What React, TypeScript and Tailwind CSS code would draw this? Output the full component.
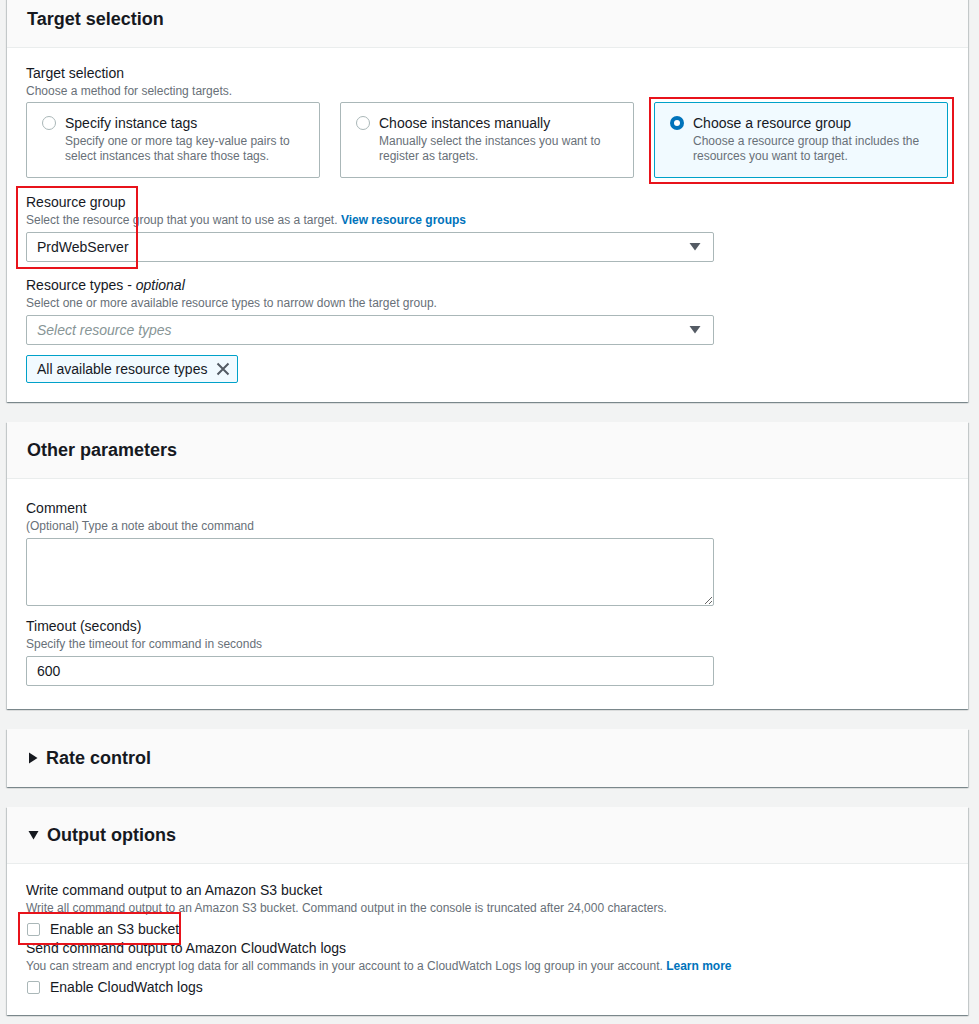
import type { ReactNode } from "react";

const font = { fontFamily: '"Liberation Sans", Arial, sans-serif' };

function Panel({ children, className = "" }: { children: ReactNode; className?: string }) {
  return (
    <div
      className={`ml-[7px] w-[961px] bg-white shadow-[0_1px_1px_0_rgba(0,28,36,0.3),1px_1px_1px_0_rgba(0,28,36,0.15),-1px_1px_1px_0_rgba(0,28,36,0.15)] ${className}`}
    >
      {children}
    </div>
  );
}

function CaretRight() {
  return (
    <svg width="10" height="12" viewBox="0 0 10 12" className="ml-[1px]">
      <path d="M1 0.5 L9.5 6 L1 11.5 Z" fill="#16191f" />
    </svg>
  );
}

function CaretDown() {
  return (
    <svg width="11" height="10" viewBox="0 0 11 10" className="ml-[1px]">
      <path d="M0.5 1 L10.5 1 L5.5 9.5 Z" fill="#16191f" />
    </svg>
  );
}

function Header({ title, caret }: { title: string; caret?: "right" | "down" }) {
  return (
    <div className="flex h-[57px] items-center gap-[8px] border-b border-[#eaeded] bg-[#fafafa] px-[20px]">
      {caret === "right" && <CaretRight />}
      {caret === "down" && <CaretDown />}
      <h2 className="text-[18px] font-bold text-[#16191f]">{title}</h2>
    </div>
  );
}

function Label({ children }: { children: ReactNode }) {
  return <div className="text-[14px] leading-[19px] text-[#16191f]">{children}</div>;
}

function Desc({ children }: { children: ReactNode }) {
  return <div className="text-[12px] leading-[16px] text-[#687078]">{children}</div>;
}

function Caret() {
  return (
    <svg width="12" height="10" viewBox="0 0 12 10">
      <path d="M0.5 1 L11.5 1 L6 8.5 Z" fill="#545b64" />
    </svg>
  );
}

function Radio({ checked }: { checked?: boolean }) {
  return checked ? (
    <span className="mt-[3px] flex h-[14px] w-[14px] shrink-0 items-center justify-center rounded-full bg-[#0073bb]">
      <span className="h-[6px] w-[6px] rounded-full bg-white" />
    </span>
  ) : (
    <span className="mt-[3px] h-[14px] w-[14px] shrink-0 rounded-full border border-[#aab7b8] bg-white" />
  );
}

function Card({ title, desc, checked }: { title: string; desc: string; checked?: boolean }) {
  return (
    <div
      className={`relative flex h-[76px] w-[294px] gap-[9px] rounded-[2px] border px-[15px] pt-[10px] ${
        checked ? "border-[#00a1c9] bg-[#f1faff]" : "border-[#aab7b8] bg-white"
      }`}
    >
      <Radio checked={checked} />
      <div>
        <div className="text-[14px] leading-[20px] text-[#16191f]">{title}</div>
        <div className="mt-[1px] text-[12px] leading-[15px] text-[#687078]">{desc}</div>
      </div>
      {checked && (
        <div className="pointer-events-none absolute -top-[6px] -right-[7px] -bottom-[7px] -left-[6px] border-2 border-[#e8131b]" />
      )}
    </div>
  );
}

function Checkbox({ label }: { label: string }) {
  return (
    <div className="flex h-[20px] items-center gap-[10px] pl-[1px]">
      <span className="h-[13px] w-[13px] rounded-[2px] border border-[#aab7b8] bg-white" />
      <span className="text-[14px] text-[#16191f]">{label}</span>
    </div>
  );
}

export default function App() {
  return (
    <div className="min-h-[1024px] w-[979px] overflow-hidden bg-[#f2f3f3]" style={font}>
      {/* Target selection */}
      <Panel className="-mt-[9px]">
        <Header title="Target selection" />
        <div className="px-[19px] pt-[16px] pb-[19px]">
          <Label>Target selection</Label>
          <Desc>Choose a method for selecting targets.</Desc>
          <div className="mt-[3px] flex gap-[20px]">
            <Card
              title="Specify instance tags"
              desc="Specify one or more tag key-value pairs to select instances that share those tags."
            />
            <Card
              title="Choose instances manually"
              desc="Manually select the instances you want to register as targets."
            />
            <Card
              checked
              title="Choose a resource group"
              desc="Choose a resource group that includes the resources you want to target."
            />
          </div>

          <div className="relative mt-[15px]">
            <Label>Resource group</Label>
            <Desc>
              Select the resource group that you want to use as a target.{" "}
              <span className="font-bold text-[#0073bb]">View resource groups</span>
            </Desc>
            <div className="mt-[4px] flex h-[30px] w-[688px] items-center justify-between rounded-[2px] border border-[#aab7b8] bg-white pr-[12px] pl-[10px]">
              <span className="text-[14px] text-[#16191f]">PrdWebServer</span>
              <Caret />
            </div>
            <div className="pointer-events-none absolute -top-[7px] -left-[10px] h-[83px] w-[122px] border-2 border-[#e8131b]" />
          </div>

          <div className="mt-[14px]">
            <Label>
              Resource types - <i>optional</i>
            </Label>
            <Desc>Select one or more available resource types to narrow down the target group.</Desc>
            <div className="mt-[4px] flex h-[30px] w-[688px] items-center justify-between rounded-[2px] border border-[#aab7b8] bg-white pr-[12px] pl-[10px]">
              <span className="text-[14px] text-[#879596] italic">Select resource types</span>
              <Caret />
            </div>
          </div>

          <div className="mt-[10px] inline-flex h-[28px] items-center gap-[9px] rounded-[2px] border border-[#00a1c9] bg-[#f1faff] pr-[7px] pl-[10px]">
            <span className="text-[14px] text-[#16191f]">All available resource types</span>
            <svg width="14" height="14" viewBox="0 0 14 14">
              <path d="M1.5 1.5 L12.5 12.5 M12.5 1.5 L1.5 12.5" stroke="#545b64" strokeWidth="2" />
            </svg>
          </div>
        </div>
      </Panel>

      {/* Other parameters */}
      <Panel className="mt-[20px]">
        <Header title="Other parameters" />
        <div className="px-[19px] pt-[20px] pb-[23px]">
          <Label>Comment</Label>
          <Desc>(Optional) Type a note about the command</Desc>
          <textarea
            className="mt-[4px] block h-[68px] w-[688px] rounded-[2px] border border-[#aab7b8] bg-white"
            readOnly
          />
          <div className="mt-[11px]">
            <Label>Timeout (seconds)</Label>
            <Desc>Specify the timeout for command in seconds</Desc>
            <div className="mt-[4px] flex h-[30px] w-[688px] items-center rounded-[2px] border border-[#aab7b8] bg-white pl-[10px]">
              <span className="text-[14px] text-[#16191f]">600</span>
            </div>
          </div>
        </div>
      </Panel>

      {/* Rate control */}
      <Panel className="mt-[20px]">
        <div className="flex h-[58px] items-center gap-[8px] bg-[#fafafa] px-[20px]">
          <CaretRight />
          <h2 className="text-[18px] font-bold text-[#16191f]">Rate control</h2>
        </div>
      </Panel>

      {/* Output options */}
      <Panel className="mt-[20px]">
        <Header title="Output options" caret="down" />
        <div className="px-[19px] pt-[17px] pb-[18px]">
          <Label>Write command output to an Amazon S3 bucket</Label>
          <Desc>
            Write all command output to an Amazon S3 bucket. Command output in the console is truncated after
            24,000 characters.
          </Desc>
          <div className="relative mt-[3px]">
            <Checkbox label="Enable an S3 bucket" />
            <div className="pointer-events-none absolute -top-[7px] -left-[8px] h-[33px] w-[163px] border-2 border-[#e8131b]" />
          </div>
          <Label>Send command output to Amazon CloudWatch logs</Label>
          <Desc>
            You can stream and encrypt log data for all commands in your account to a CloudWatch Logs log group in
            your account. <span className="font-bold text-[#0073bb]">Learn more</span>
          </Desc>
          <div className="mt-[3px]">
            <Checkbox label="Enable CloudWatch logs" />
          </div>
        </div>
      </Panel>
    </div>
  );
}
